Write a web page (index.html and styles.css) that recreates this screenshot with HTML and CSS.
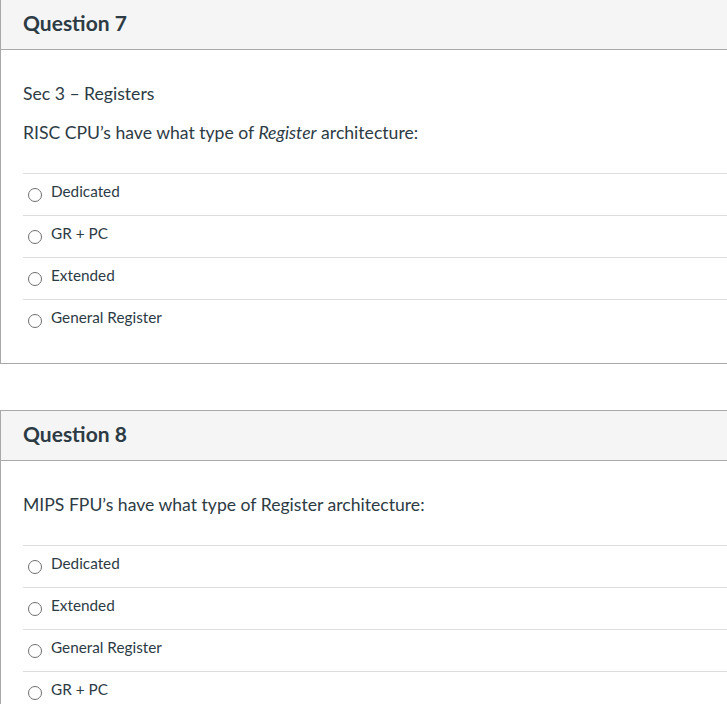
FILE: index.html
```html
<!DOCTYPE html>
<html>
<head>
<meta charset="utf-8">
<link rel="stylesheet" href="styles.css">
</head>
<body>
<div class="quiz">
  <section class="card card-first">
    <div class="card-header"><h2>Question 7</h2></div>
    <div class="card-body">
      <p class="q-text q-first">Sec 3 – Registers</p>
      <p class="q-text">RISC CPU’s have what type of <em>Register</em> architecture:</p>
      <ul class="answers">
        <li class="answer"><span class="radio"></span><span class="label">Dedicated</span></li>
        <li class="answer"><span class="radio"></span><span class="label">GR + PC</span></li>
        <li class="answer"><span class="radio"></span><span class="label">Extended</span></li>
        <li class="answer"><span class="radio"></span><span class="label">General Register</span></li>
      </ul>
    </div>
  </section>
  <section class="card">
    <div class="card-header"><h2>Question 8</h2></div>
    <div class="card-body">
      <p class="q-text q-first">MIPS FPU’s have what type of Register architecture:</p>
      <ul class="answers">
        <li class="answer"><span class="radio"></span><span class="label">Dedicated</span></li>
        <li class="answer"><span class="radio"></span><span class="label">Extended</span></li>
        <li class="answer"><span class="radio"></span><span class="label">General Register</span></li>
        <li class="answer"><span class="radio"></span><span class="label">GR + PC</span></li>
      </ul>
    </div>
  </section>
</div>
</body>
</html>
```
FILE: styles.css
```css
html, body {
  margin: 0;
  padding: 0;
  background: #ffffff;
  overflow: hidden;
}
body {
  font-family: Lato, "Open Sans", sans-serif;
  color: #2d3b45;
  font-size: 16px;
}
.quiz {
  display: flex;
  flex-direction: column;
  gap: 46px;
}
.card {
  border: 1px solid #a9a9a9;
  border-right: 0;
  background: #fff;
}
.card-first {
  border-top: 0;
}
.card-header {
  box-sizing: border-box;
  height: 50px;
  background: #f5f5f5;
  border-bottom: 1px solid #a9a9a9;
  display: flex;
  align-items: center;
  padding-left: 22px;
  padding-bottom: 3px;
}
.card-header h2 {
  margin: 0;
  font-size: 21px;
  font-weight: 700;
  line-height: 24px;
  color: #2d3b45;
}
.card-body {
  padding: 0 0 22px 22px;
}
.q-text {
  margin: 15px 0 0;
  line-height: 24px;
  font-size: 17.6px;
}
.q-text.q-first {
  margin-top: 32px;
}
.answers {
  list-style: none;
  margin: 28px 0 0;
  padding: 0;
}
.answer {
  border-top: 1px solid #dddddd;
  height: 41px;
  display: flex;
  align-items: center;
  padding-left: 5px;
}
.radio {
  width: 12px;
  height: 12px;
  border: 1px solid #6f6f6f;
  border-radius: 50%;
  flex: none;
  margin-right: 9px;
}
.label {
  font-size: 15.3px;
  line-height: 20px;
  position: relative;
  top: -4px;
}
```
